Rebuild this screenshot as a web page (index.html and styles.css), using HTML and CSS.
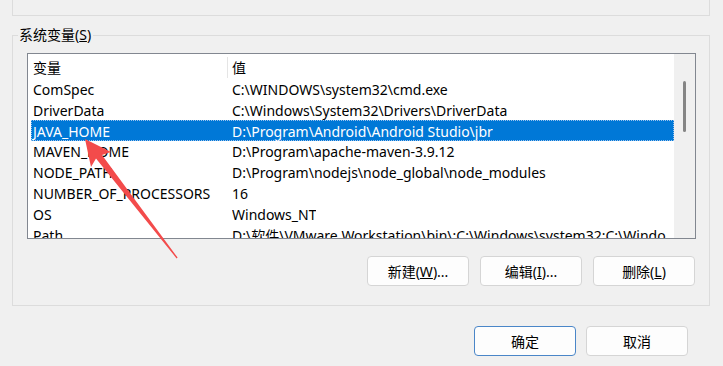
FILE: index.html
```html
<!DOCTYPE html>
<html lang="zh-CN">

<head>
    <meta charset="UTF-8">
    <title>环境变量</title>
    <link rel="stylesheet" href="styles.css">
</head>

<body>
<div class="dialog">
    <div class="user-group"></div>

    <fieldset class="sys-group">
        <legend>系统变量(<u>S</u>)</legend>

        <div class="list">
            <div class="list-body">
                <div class="list-head">
                    <div class="head-name">变量</div>
                    <div class="head-value">值</div>
                </div>
                <div class="row"><div class="cell-name">ComSpec</div><div class="cell-value">C:\WINDOWS\system32\cmd.exe</div></div>
                <div class="row"><div class="cell-name">DriverData</div><div class="cell-value">C:\Windows\System32\Drivers\DriverData</div></div>
                <div class="row selected"><div class="cell-name">JAVA_HOME</div><div class="cell-value">D:\Program\Android\Android Studio\jbr</div></div>
                <div class="row"><div class="cell-name">MAVEN_HOME</div><div class="cell-value">D:\Program\apache-maven-3.9.12</div></div>
                <div class="row"><div class="cell-name">NODE_PATH</div><div class="cell-value">D:\Program\nodejs\node_global\node_modules</div></div>
                <div class="row"><div class="cell-name">NUMBER_OF_PROCESSORS</div><div class="cell-value">16</div></div>
                <div class="row"><div class="cell-name">OS</div><div class="cell-value">Windows_NT</div></div>
                <div class="row"><div class="cell-name">Path</div><div class="cell-value">D:\软件\VMware Workstation\bin\;C:\Windows\system32;C:\Windo</div></div>
            </div>
            <div class="scrollbar">
                <div class="thumb"></div>
            </div>
        </div>

        <div class="list-buttons">
            <div class="button">新建(<u>W</u>)...</div>
            <div class="button">编辑(<u>I</u>)...</div>
            <div class="button">删除(<u>L</u>)</div>
        </div>
    </fieldset>

    <div class="dialog-buttons">
        <div class="button default">确定</div>
        <div class="button">取消</div>
    </div>

    <svg class="arrow" width="723" height="366" viewBox="0 0 723 366">
        <polygon points="85,139 111,152 102,155 177.6,257.6 176.6,258.4 96,158.5 91,167" fill="#f34b4b"/>
    </svg>
</div>
</body>
</html>
```

FILE: styles.css
```css
* {
    margin: 0;
    padding: 0;
    box-sizing: border-box;
}

body {
    width: 723px;
    height: 366px;
    overflow: hidden;
    background-color: #f0f0f0;
    font-family: "Noto Sans", "Noto Sans CJK SC", sans-serif;
    font-size: 14px;
    color: #000000;
}

.dialog {
    position: relative;
    width: 723px;
    height: 366px;
}

.user-group {
    margin-left: 12px;
    width: 698px;
    height: 16px;
    border: 1px solid #dcdcdc;
    border-top: none;
}

.sys-group {
    margin: 9px 0 0 12px;
    width: 698px;
    min-width: 0;
    height: 281px;
    border: 1px solid #dcdcdc;
    padding: 8px 13px 0 0;
}

.sys-group legend {
    margin-left: 5px;
    padding: 0 2px 0 1px;
    line-height: 20px;
}

.list {
    display: flex;
    margin-left: 14px;
    height: 186px;
    border: 1px solid #828790;
    background-color: #ffffff;
    overflow: hidden;
}

.list-body {
    flex: 1;
    min-width: 0;
    padding-left: 3px;
    overflow: hidden;
}

.list-head {
    display: flex;
    height: 24.6px;
    padding-top: 2px;
    align-items: center;
}

.head-name {
    width: 197px;
    padding-left: 2px;
    border-right: 1px solid #e5e5e5;
    line-height: 21px;
}

.head-value {
    padding-left: 4px;
}

.row {
    display: flex;
    height: 20.8px;
    padding-top: 1px;
    align-items: center;
    white-space: nowrap;
}

.row.selected {
    background-color: #0078d7;
    color: #ffffff;
    outline: 1px dotted #9cc3ee;
    outline-offset: -1px;
}

.cell-name {
    width: 201px;
    flex-shrink: 0;
    padding-left: 2px;
}

.cell-value {
    min-width: 0;
    overflow: hidden;
}

.scrollbar {
    width: 21px;
    flex-shrink: 0;
    background-color: #f0f0f0;
    padding: 27px 0 0 9px;
}

.thumb {
    width: 3px;
    height: 51px;
    border-radius: 2px;
    background-color: #858585;
}

.list-buttons {
    display: flex;
    justify-content: flex-end;
    gap: 11px;
    margin: 17px 1px 0 0;
}

.button {
    width: 102px;
    height: 30px;
    display: flex;
    justify-content: center;
    align-items: center;
    background-color: #fdfdfd;
    border: 1px solid #d5d5d5;
    border-radius: 4px;
}

.button.default {
    border-color: #4a86c8;
}

.dialog-buttons {
    display: flex;
    justify-content: flex-end;
    gap: 10px;
    margin: 20px 35px 0 0;
}

.arrow {
    position: absolute;
    left: 0;
    top: 0;
    pointer-events: none;
}
```
